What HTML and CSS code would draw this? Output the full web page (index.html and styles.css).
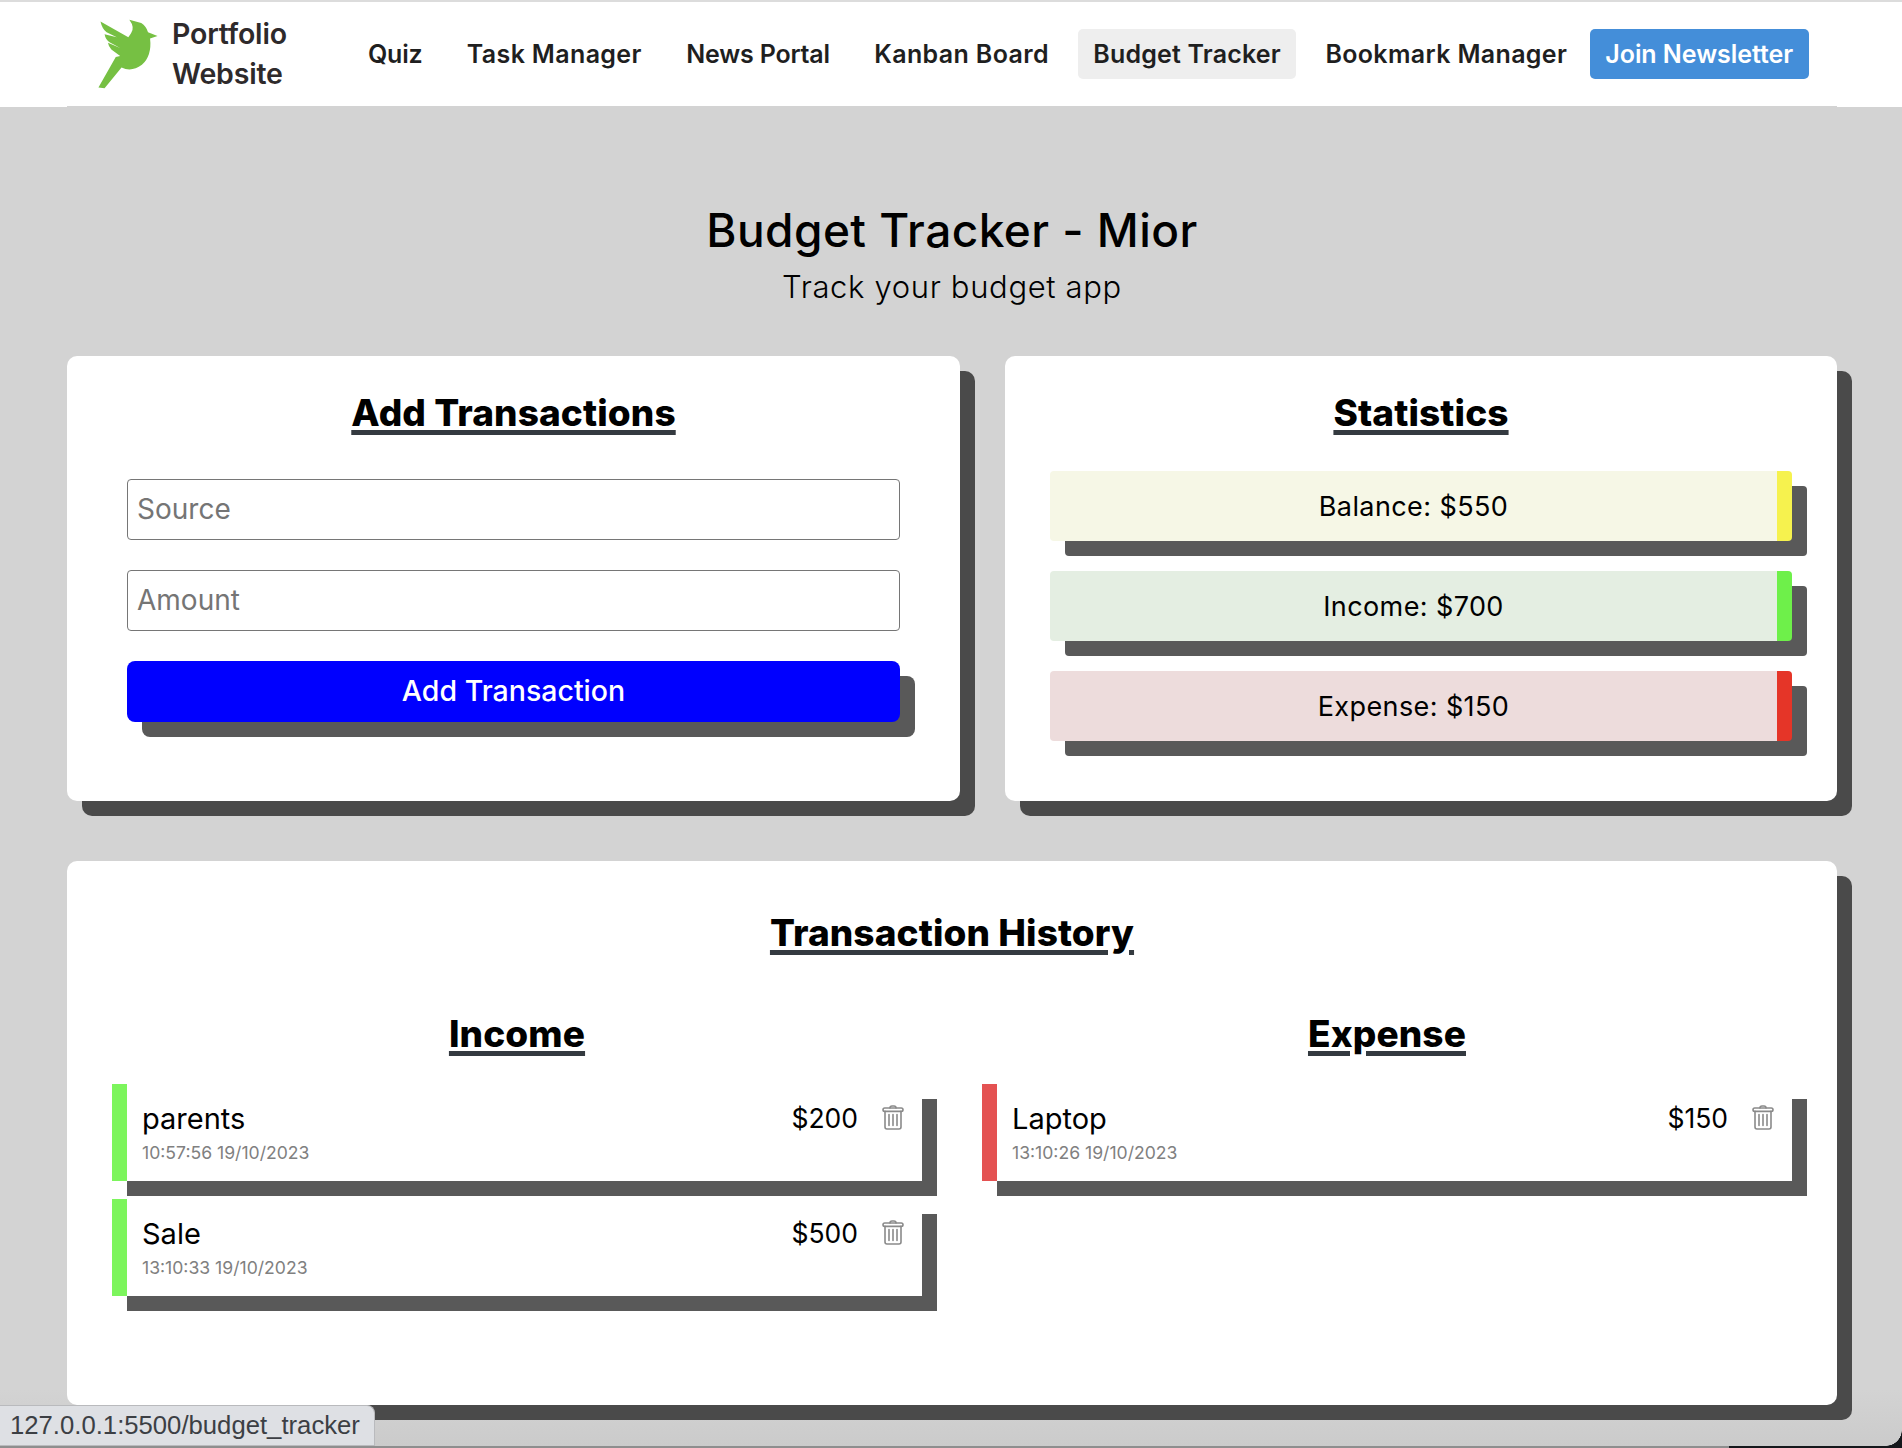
FILE: index.html
```html
<!DOCTYPE html>
<html lang="en">
<head>
<meta charset="utf-8">
<title>Budget Tracker</title>
<link rel="stylesheet" href="styles.css">
</head>
<body>
<nav class="nav">
  <a class="brand">
    <svg class="brand-logo" viewBox="50 40 185 212"><path fill="#76c043" d="M60 50 L142 97 L150 85 Q162 68 145 45 L180 55 Q195 65 200 82 L228 93 L206 100 Q212 150 182 178 Q152 200 122 186 L72 247 L54 245 L105 155 L118 152 L92 133 Q84 125 82 113 L118 128 L88 112 Q75 105 72 88 L108 97 L78 82 Q65 72 60 50 Z"/></svg>
    <span class="brand-name">Portfolio<br>Website</span>
  </a>
  <div class="links">
    <a class="link link-quiz">Quiz</a>
    <a class="link">Task Manager</a>
    <a class="link link-news">News Portal</a>
    <a class="link">Kanban Board</a>
    <a class="link active">Budget Tracker</a>
    <a class="link">Bookmark Manager</a>
    <a class="link cta">Join Newsletter</a>
  </div>
</nav>
<main class="main">
  <header class="head">
    <h1 class="title">Budget Tracker - Mior</h1>
    <p class="subtitle">Track your budget app</p>
  </header>
  <div class="top-row">
    <section class="card card-add">
      <h2 class="card-title">Add Transactions</h2>
      <form class="form">
        <input class="field" placeholder="Source">
        <input class="field" placeholder="Amount">
        <button class="submit" type="button">Add Transaction</button>
      </form>
    </section>
    <section class="card card-stats">
      <h2 class="card-title">Statistics</h2>
      <div class="stats">
        <div class="stat stat-balance">Balance: $550</div>
        <div class="stat stat-income">Income: $700</div>
        <div class="stat stat-expense">Expense: $150</div>
      </div>
    </section>
  </div>
  <section class="card card-history">
    <h2 class="card-title">Transaction History</h2>
    <div class="columns">
      <div class="column">
        <h3 class="col-title">Income</h3>
        <div class="item item-income">
          <div class="item-main"><div class="item-name">parents</div><div class="item-date">10:57:56 19/10/2023</div></div>
          <div class="item-amount">$200</div>
          <svg class="trash" viewBox="0 0 22 25"><g fill="none" stroke="#8a8a8a" stroke-width="1.6" stroke-linecap="round" stroke-linejoin="round"><path d="M8 3 Q8 1 10 1 H12 Q14 1 14 3"/><rect x="1" y="3" width="20" height="3.4" rx="1.7"/><path d="M3 6.4 V22 Q3 24 5 24 H17 Q19 24 19 22 V6.4"/><path d="M7 9.5 V20.5 M11 9.5 V20.5 M15 9.5 V20.5"/></g></svg>
        </div>
        <div class="item item-income">
          <div class="item-main"><div class="item-name">Sale</div><div class="item-date">13:10:33 19/10/2023</div></div>
          <div class="item-amount">$500</div>
          <svg class="trash" viewBox="0 0 22 25"><g fill="none" stroke="#8a8a8a" stroke-width="1.6" stroke-linecap="round" stroke-linejoin="round"><path d="M8 3 Q8 1 10 1 H12 Q14 1 14 3"/><rect x="1" y="3" width="20" height="3.4" rx="1.7"/><path d="M3 6.4 V22 Q3 24 5 24 H17 Q19 24 19 22 V6.4"/><path d="M7 9.5 V20.5 M11 9.5 V20.5 M15 9.5 V20.5"/></g></svg>
        </div>
      </div>
      <div class="column">
        <h3 class="col-title">Expense</h3>
        <div class="item item-expense">
          <div class="item-main"><div class="item-name">Laptop</div><div class="item-date">13:10:26 19/10/2023</div></div>
          <div class="item-amount">$150</div>
          <svg class="trash" viewBox="0 0 22 25"><g fill="none" stroke="#8a8a8a" stroke-width="1.6" stroke-linecap="round" stroke-linejoin="round"><path d="M8 3 Q8 1 10 1 H12 Q14 1 14 3"/><rect x="1" y="3" width="20" height="3.4" rx="1.7"/><path d="M3 6.4 V22 Q3 24 5 24 H17 Q19 24 19 22 V6.4"/><path d="M7 9.5 V20.5 M11 9.5 V20.5 M15 9.5 V20.5"/></g></svg>
        </div>
      </div>
    </div>
  </section>
</main>
<div class="status">127.0.0.1:5500/budget_tracker</div>
<div class="desk"></div>
<div class="corner"></div>
</body>
</html>
```
FILE: styles.css
```css
* { box-sizing: border-box; }
html, body { margin: 0; height: 100%; }
body {
  height: 1448px;
  overflow: hidden;
  background: linear-gradient(#d3d3d3 1390px, #cbcbcb 1446px);
  color: #000;
  font-family: Inter, "Noto Sans", sans-serif;
  position: relative;
}
.nav {
  position: relative;
  height: 107px;
  border-top: 2px solid #dcdcdc;
  background: #fff;
  display: flex;
  align-items: center;
  padding: 0 95px 1px 97px;
}
.nav::after {
  content: "";
  position: absolute;
  left: 67px;
  right: 65px;
  bottom: 0;
  height: 1px;
  background: #d3d3d3;
}
.brand { display: flex; align-items: center; gap: 12px; width: 256px; flex: none; }
.brand-logo { width: 63px; height: 72px; display: block; }
.brand-name { font-size: 28.5px; font-weight: 600; line-height: 40px; color: #2e2a2b; letter-spacing: -0.2px; }
.links { display: flex; align-items: center; gap: 14.5px; flex: 1; min-width: 0; }
.link {
  height: 50px;
  padding: 0 15px;
  display: flex;
  align-items: center;
  font-size: 25px;
  font-weight: 600;
  color: #1f1f1f;
  border-radius: 5px;
  white-space: nowrap;
  letter-spacing: 0.35px;
}
.link-quiz { letter-spacing: -0.25px; }
.link-news { letter-spacing: -0.2px; }
.active { background: #eee; letter-spacing: 0.18px; }
.cta { background: #448ed9; color: #fff; margin-left: -7px; padding: 0 15.5px; letter-spacing: -0.05px; }
.main { padding: 0 65px 0 67px; }
.head { padding-top: 99px; margin-bottom: 49px; text-align: center; }
.title { margin: 0; font-size: 46px; line-height: 48px; font-weight: 500; letter-spacing: 0.46px; }
.subtitle { margin: 13px 0 0; font-size: 31px; line-height: 40px; font-weight: 300; letter-spacing: 0.65px; }
.top-row { display: flex; gap: 45px; }
.card {
  background: #fff;
  border-radius: 10px;
  box-shadow: 15px 15px 0 #4a4a4a;
}
.card-add { width: 893px; height: 445px; padding: 36px 60px 0; }
.card-stats { width: 832px; height: 445px; padding: 36px 45px 0; }
.card-title,
.col-title {
  margin: 0;
  text-align: center;
  font-size: 37px;
  line-height: 42px;
  font-weight: 800;
  letter-spacing: 0.1px;
  text-decoration: underline;
  text-decoration-color: #343a40;
  text-decoration-thickness: 5px;
  text-underline-offset: 4px;
}
.form { display: flex; flex-direction: column; gap: 30px; margin-top: 45px; }
.field {
  height: 61px;
  border: 1px solid #767676;
  border-radius: 4px;
  padding: 0 9px 2px;
  font: 400 28px Inter, "Noto Sans", sans-serif;
  background: #fff;
}
.field::placeholder { color: #757575; opacity: 1; }
.submit {
  height: 61px;
  padding-bottom: 4px;
  border: 0;
  border-radius: 8px;
  background: #0000ff;
  color: #fff;
  font: 500 28.5px Inter, "Noto Sans", sans-serif;
  box-shadow: 15px 15px 0 #595959;
}
.stats { display: flex; flex-direction: column; gap: 30px; margin-top: 37px; }
.stat {
  height: 70px;
  border-right: 15px solid;
  border-radius: 4px;
  display: flex;
  align-items: center;
  justify-content: center;
  font-size: 27px;
  letter-spacing: 0.4px;
  box-shadow: 15px 15px 0 #595959;
}
.stat-balance { background: #f6f7e6; border-right-color: #f6f24e; }
.stat-income { background: #e4eee2; border-right-color: #6ef04a; }
.stat-expense { background: #eddcdc; border-right-color: #e53528; }
.card-history { margin-top: 60px; height: 544px; padding: 51px 45px 0; }
.columns { display: flex; gap: 60px; margin-top: 59px; }
.column { width: 810px; display: flex; flex-direction: column; gap: 18px; }
.col-title { margin-bottom: 11px; }
.item {
  height: 97px;
  display: flex;
  align-items: flex-start;
  padding: 16px 18px 0 15px;
  border-left: 15px solid;
  background: #fff;
  box-shadow: 15px 15px 0 #595959;
}
.item-income { border-left-color: #7cf55c; }
.item-expense { border-left-color: #e45252; }
.item-main { flex: 1; }
.item-name { font-size: 29px; line-height: 38px; }
.item-date { font-size: 17.6px; line-height: 24px; margin-top: 3px; color: #808080; }
.item-amount { font-size: 26.5px; line-height: 36px; margin-right: 24px; }
.trash { width: 22px; height: 25px; margin-top: 5px; display: block; }
.status {
  position: absolute;
  left: 0;
  top: 1405px;
  width: 375px;
  height: 41px;
  padding-left: 10px;
  display: flex;
  align-items: center;
  background: #dee0e4;
  color: #3c3f44;
  border: 1px solid #b9babd;
  border-width: 1px 1px 1px 0;
  border-radius: 0 8px 0 0;
  font: 400 25.7px "Liberation Sans", Arial, sans-serif;
  white-space: nowrap;
}
.desk {
  position: absolute;
  left: 0;
  right: 0;
  bottom: 0;
  height: 2px;
  background: linear-gradient(90deg, #8e8e8e 1729px, #15181c 1729px);
}
.corner {
  position: absolute;
  right: 0;
  bottom: 2px;
  width: 16px;
  height: 16px;
  background: radial-gradient(circle at 0 0, transparent 15.5px, #15181c 16px);
}
```
